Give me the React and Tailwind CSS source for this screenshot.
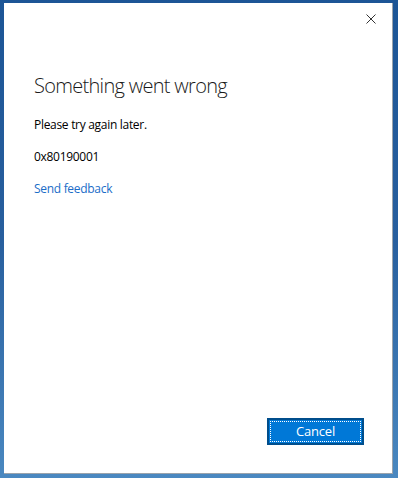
import React from "react";

export default function App() {
  return (
    <div className="w-[398px] h-[478px] bg-gradient-to-b from-[#1c5596] via-[#285f9e] to-[#4a88c0] pt-[3px] pl-[4px] pr-[5px] pb-[4px] flex">
      <div className="flex-1 bg-white border-r border-b border-[#9aa3ac] flex flex-col relative" style={{ fontFamily: '"Open Sans", "Noto Sans", sans-serif' }}>
        <button className="absolute right-[13px] top-[8px] w-[16px] h-[16px] flex items-center justify-center">
          <svg width="10" height="10" viewBox="0 0 10 10">
            <path d="M0.5 0.5L9.5 9.5M9.5 0.5L0.5 9.5" stroke="#333" strokeWidth="1" />
          </svg>
        </button>
        <div className="pl-[30px] pt-[69px] flex flex-col">
          <h1 className="text-[20px] leading-[28px] font-light tracking-[-0.7px] text-[#1a1a1a]">Something went wrong</h1>
          <p className="mt-[17px] text-[12px] leading-[16px] tracking-[-0.3px] text-black">Please try again later.</p>
          <p className="mt-[16px] text-[12px] leading-[16px] tracking-[-0.3px] text-black">0x80190001</p>
          <p className="mt-[16px] text-[12px] leading-[16px] tracking-[-0.3px] text-[#1a6dc8]">Send feedback</p>
        </div>
        <div className="mt-auto flex justify-end pr-[28px] pb-[28px]">
          <button className="w-[97px] h-[27px] bg-[#0078d7] border-2 border-[#004e8c] p-[1px] flex">
            <span className="flex-1 border border-dotted border-white flex items-center justify-center text-white text-[13px] leading-none tracking-[-0.2px]">Cancel</span>
          </button>
        </div>
      </div>
    </div>
  );
}
